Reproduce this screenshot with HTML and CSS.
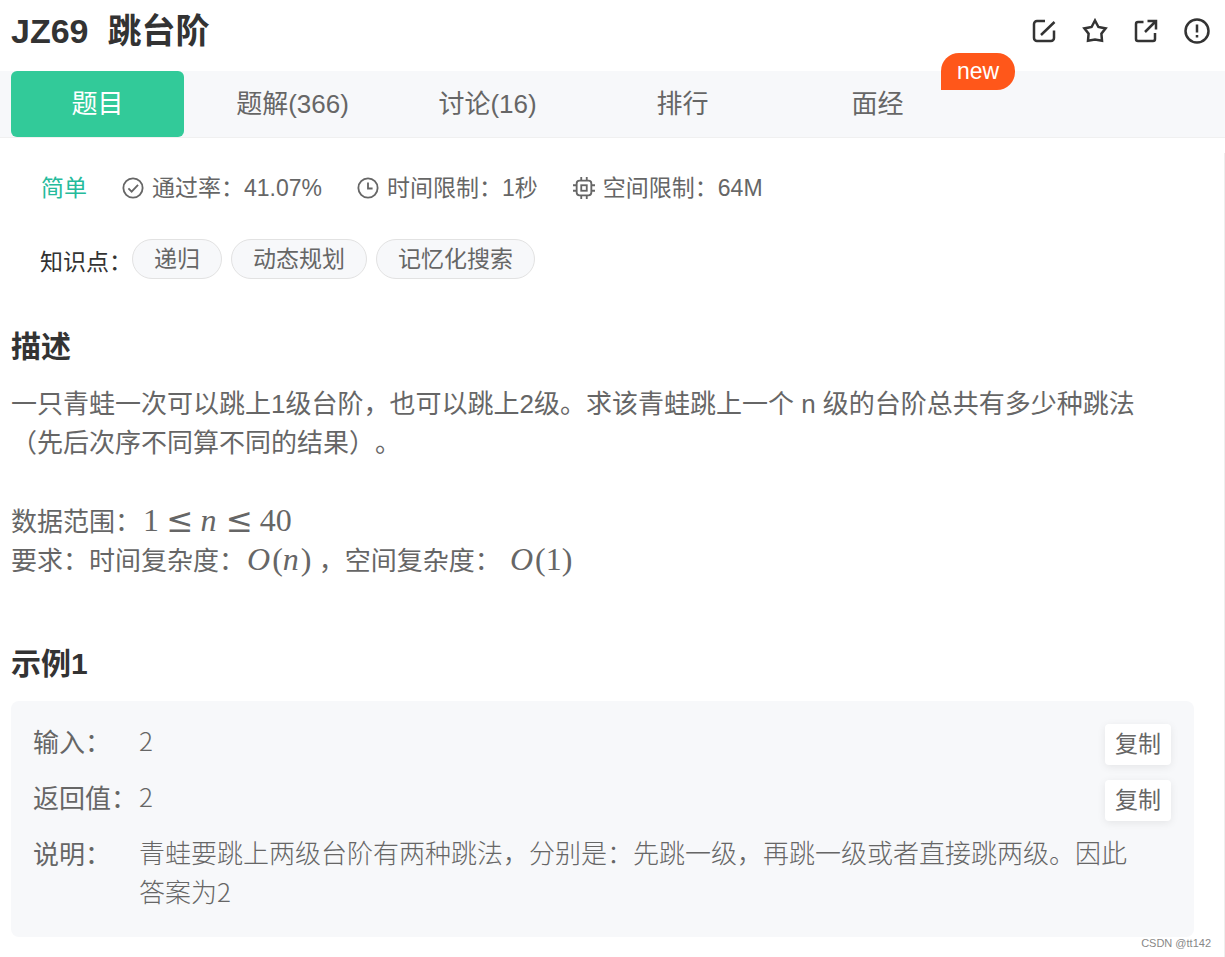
FILE: index.html
```html
<!DOCTYPE html>
<html lang="zh-CN">
<head>
  <meta charset="UTF-8" />
  <meta name="viewport" content="width=device-width, initial-scale=1.0" />
  <title>JZ69 跳台阶</title>
  <link rel="stylesheet" href="styles.css">
</head>
<body>
  <header class="header">
    <h1>JZ69&nbsp; 跳台阶</h1>
    <div class="actions">
      <button type="button" aria-label="笔记">
        <svg viewBox="0 0 26 26"><path d="M14 3H6a3 3 0 0 0-3 3V20a3 3 0 0 0 3 3H20a3 3 0 0 0 3-3V12.500M10 17 23.500 4" /></svg>
      </button>
      <button type="button" aria-label="收藏">
        <svg viewBox="0 0 26 26"><path d="M13 2.500 16.400 9 23.600 10.400 19.400 15.600 20 22.800 13 21.400 6 22.800 6.600 15.600 2.400 10.400 9.600 9Z" /></svg>
      </button>
      <button type="button" aria-label="分享">
        <svg viewBox="0 0 26 26"><path d="M10.500 4H5a2 2 0 0 0-2 2V21a2 2 0 0 0 2 2H20a2 2 0 0 0 2-2V15M14.500 3H23V11.500M23 3 12 14" /></svg>
      </button>
      <button type="button" aria-label="反馈">
        <svg viewBox="0 0 26 26"><circle cx="13" cy="13" r="11.500" /><path d="M13 6.500V14.500M13 17V19.500" /></svg>
      </button>
    </div>
  </header>

  <nav class="tabs">
    <a href="#" class="tab active">题目</a>
    <a href="#" class="tab">题解(366)</a>
    <a href="#" class="tab">讨论(16)</a>
    <a href="#" class="tab">排行</a>
    <a href="#" class="tab">面经<span class="badge">new</span></a>
  </nav>

  <main class="content">
    <div class="info">
      <span class="level">简单</span>
      <span class="info-item">
        <svg viewBox="0 0 24 24"><circle cx="12" cy="12" r="10.500" /><path d="M7 12.500 10.500 16 17.500 8.500" /></svg>
        通过率：41.07%
      </span>
      <span class="info-item">
        <svg viewBox="0 0 24 24"><circle cx="12" cy="12" r="10.500" /><path d="M12 6V12.500H17" /></svg>
        时间限制：1秒
      </span>
      <span class="info-item">
        <svg viewBox="0 0 24 24"><rect x="4" y="4" width="16" height="16" rx="3" /><rect x="9" y="9" width="6" height="6" /><path d="M9 0V4M15 0V4M9 20V24M15 20V24M0 9H4M0 15H4M20 9H24M20 15H24" /></svg>
        空间限制：64M
      </span>
    </div>

    <div class="tags">
      <span class="tags-label">知识点：</span>
      <ul class="tag-list">
        <li><a href="#" class="tag">递归</a></li>
        <li><a href="#" class="tag">动态规划</a></li>
        <li><a href="#" class="tag">记忆化搜索</a></li>
      </ul>
    </div>

    <section class="description">
      <h2>描述</h2>
      <p>一只青蛙一次可以跳上1级台阶，也可以跳上2级。求该青蛙跳上一个 n 级的台阶总共有多少种跳法（先后次序不同算不同的结果）。</p>
      <p>
        数据范围：<span class="math">1<span class="rel">≤</span><i>n</i><span class="rel">≤</span>40</span><br>
        要求：时间复杂度：<span class="math"><i>O</i>(<i>n</i>)</span> ，空间复杂度： <span class="math"><i>O</i>(1)</span>
      </p>
    </section>

    <section class="example">
      <h2>示例1</h2>
      <div class="example-box">
        <div class="row">
          <span class="row-label">输入：</span>
          <code class="row-value">2</code>
          <button type="button" class="copy">复制</button>
        </div>
        <div class="row">
          <span class="row-label">返回值：</span>
          <code class="row-value">2</code>
          <button type="button" class="copy">复制</button>
        </div>
        <div class="row">
          <span class="row-label">说明：</span>
          <code class="row-value">青蛙要跳上两级台阶有两种跳法，分别是：先跳一级，再跳一级或者直接跳两级。因此答案为2</code>
        </div>
      </div>
    </section>
    <footer class="credit">CSDN @tt142</footer>
  </main>
</body>
</html>
```
FILE: styles.css
```css
* {
  box-sizing: border-box;
}

body {
  margin: 0;
  background: #fff;
  color: #666;
  font-family: "Liberation Sans", "Noto Sans CJK SC", sans-serif;
  font-size: 26px;
  line-height: 39px;
  text-spacing-trim: space-all;
}

h1,
h2,
p,
ul {
  margin: 0;
  padding: 0;
}

a {
  color: inherit;
  text-decoration: none;
}

button {
  font-family: inherit;
  color: inherit;
  border: none;
  cursor: pointer;
}

svg {
  display: block;
  fill: none;
  stroke: currentColor;
}

/* header */
.header {
  display: flex;
  justify-content: space-between;
  align-items: center;
  padding: 6px 15px 15px 11px;
  color: #333;
}

h1 {
  font-size: 34px;
  line-height: 50px;
}

.actions {
  display: flex;
  gap: 25px;
}

.actions button {
  padding: 0;
  background: none;
}

.actions svg {
  width: 26px;
  height: 26px;
  stroke-width: 2.5;
}

/* tabs */
.tabs {
  display: flex;
  gap: 22px;
  padding-left: 11px;
  background: #f7f8fa;
  border-bottom: 1px solid #f0f0f0;
}

.tab {
  position: relative;
  flex: 0 1 173px;
  line-height: 66px;
  text-align: center;
  white-space: nowrap;
}

.tab.active {
  background: #32ca99;
  color: #fff;
  border-radius: 6px;
}

.badge {
  position: absolute;
  top: -18px;
  left: 150px;
  padding: 0 16px;
  background: #ff571a;
  color: #fff;
  font-size: 23px;
  line-height: 37px;
  border-radius: 18px 18px 18px 0;
}

/* content */
.content {
  margin-top: 15px;
  padding: 16px 30px 7px 11px;
  border-right: 1px solid #eee;
}

.info {
  display: flex;
  flex-wrap: wrap;
  gap: 35px;
  padding-left: 30px;
  font-size: 23px;
}

.level {
  color: #25bb9b;
}

.info-item {
  display: flex;
  align-items: center;
  gap: 8px;
}

.info-item svg {
  width: 22px;
  height: 22px;
  margin-bottom: 2px;
  stroke-width: 2;
}

.tags {
  display: flex;
  padding: 31px 0 0 29px;
  font-size: 23px;
}

.tags-label {
  padding-top: 4px;
  color: #333;
  white-space: nowrap;
}

.tag-list {
  display: flex;
  flex-wrap: wrap;
  gap: 9px;
  list-style: none;
}

.tag {
  display: block;
  padding: 0 21px;
  background: #f7f8fa;
  border: 1px solid #e2e2e2;
  border-radius: 20px;
  line-height: 38px;
}

h2 {
  color: #333;
  font-size: 30px;
  line-height: 44px;
}

.description {
  padding: 43px 20px 0 0;
}

.description p {
  padding-top: 16px;
}

.description p + p {
  padding-top: 40px;
}

.math {
  margin-left: 2px;
  font-family: "Liberation Serif", serif;
  font-size: 32px;
  line-height: 32px;
}

.math i {
  margin-right: 2px;
}

.rel {
  margin: 0 8px;
  font-family: "DejaVu Math TeX Gyre", "DejaVu Serif", serif;
  font-size: 32px;
}

.example {
  padding-top: 61px;
}

.example-box {
  display: flex;
  flex-direction: column;
  gap: 15px;
  margin-top: 15px;
  padding: 23px 23px 27px 22px;
  background: #f7f8fa;
  border-radius: 8px;
}

.row {
  display: flex;
  align-items: flex-start;
}

.row-label {
  flex: 0 0 106px;
  white-space: nowrap;
}

.row-value {
  flex: 1;
  margin-top: -4px;
  padding-right: 30px;
  font-family: "Noto Sans CJK SC", monospace;
  font-size: 26px;
  font-weight: 300;
}

.copy {
  padding: 0 10px;
  background: #fff;
  font-size: 23px;
  line-height: 41px;
  border-radius: 4px;
  box-shadow: 0 2px 8px rgba(0, 0, 0, 0.08);
}

.credit {
  color: #888;
  font-size: 11px;
  line-height: 13px;
  text-align: right;
  margin-right: -17px;
}
```
